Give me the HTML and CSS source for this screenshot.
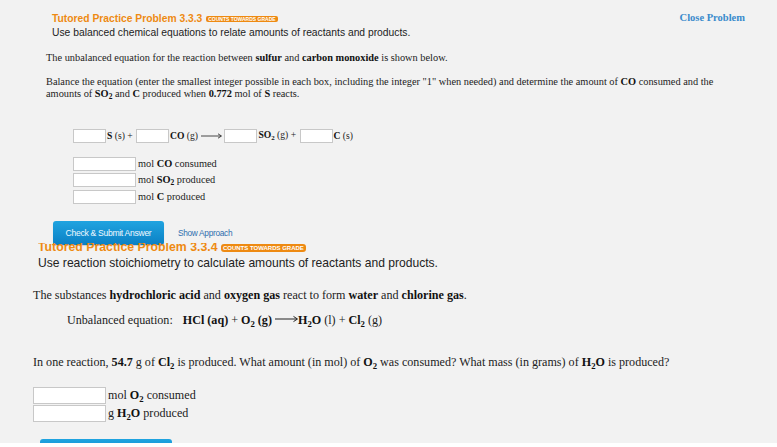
FILE: index.html
```html
<!DOCTYPE html>
<html>
<head>
<meta charset="utf-8">
<link rel="stylesheet" href="styles.css">
</head>
<body>
<div class="page">
  <section class="p1">
    <div class="p1-head">
      <div>
        <div class="p1-title">Tutored Practice Problem 3.3.3 <span class="badge1">COUNTS TOWARDS GRADE</span></div>
        <div class="p1-sub">Use balanced chemical equations to relate amounts of reactants and products.</div>
      </div>
      <a class="close">Close Problem</a>
    </div>
    <div class="p1-body">
      <p class="t1">The unbalanced equation for the reaction between <b>sulfur</b> and <b>carbon monoxide</b> is shown below.</p>
      <p class="t1 t1b">Balance the equation (enter the smallest integer possible in each box, including the integer "1" when needed) and determine the amount of <b>CO</b> consumed and the amounts of <b>SO<sub>2</sub></b> and <b>C</b> produced when <b>0.772</b> mol of <b>S</b> reacts.</p>
      <div class="eq1">
        <span class="box1"></span><span class="sp"><b>S</b> (s) + </span>
        <span class="box1"></span><span class="sp"><b>CO</b> (g) </span><svg class="arr1" width="21" height="6" viewBox="0 0 21 6"><line x1="0" y1="3" x2="20" y2="3" stroke="#333" stroke-width="0.9"/><path d="M17 0.8 L20.5 3 L17 5.2" fill="none" stroke="#333" stroke-width="0.9"/></svg>
        <span class="box1"></span><span class="sp"><b>SO<sub>2</sub></b> (g) + </span>
        <span class="box1"></span><span class="sp"><b>C</b> (s)</span>
      </div>
      <div class="ans1">
        <div class="arow1"><span class="abox1"></span><span>mol <b>CO</b> consumed</span></div>
        <div class="arow1"><span class="abox1"></span><span>mol <b>SO<sub>2</sub></b> produced</span></div>
        <div class="arow1"><span class="abox1"></span><span>mol <b>C</b> produced</span></div>
      </div>
      <div class="btns1">
        <span class="btn1">Check &amp; Submit Answer</span>
        <a class="approach">Show Approach</a>
      </div>
    </div>
  </section>
  <section class="p2">
    <div class="p2-clip"><div class="p2-title">Tutored Practice Problem 3.3.4 <span class="badge2">COUNTS TOWARDS GRADE</span></div></div>
    <div class="p2-sub">Use reaction stoichiometry to calculate amounts of reactants and products.</div>
    <p class="t2 t2a">The substances <b>hydrochloric acid</b> and <b>oxygen gas</b> react to form <b>water</b> and <b>chlorine gas</b>.</p>
    <p class="t2 eq2">Unbalanced equation:<span class="eqgap"></span><b>HCl</b> <b>(aq)</b> + <b>O<sub>2</sub></b> <b>(g)</b> <svg class="arr2" width="23" height="8" viewBox="0 0 23 8"><line x1="0" y1="4" x2="22" y2="4" stroke="#222" stroke-width="1"/><path d="M18.5 1.4 L22.5 4 L18.5 6.6" fill="none" stroke="#222" stroke-width="1"/></svg><b>H<sub>2</sub>O</b> (l) + <b>Cl<sub>2</sub></b> (g)</p>
    <p class="t2 t2c">In one reaction, <b>54.7</b> g of <b>Cl<sub>2</sub></b> is produced. What amount (in mol) of <b>O<sub>2</sub></b> was consumed? What mass (in grams) of <b>H<sub>2</sub>O</b> is produced?</p>
    <div class="ans2">
      <div class="arow2"><span class="abox2"></span><span>mol <b>O<sub>2</sub></b> consumed</span></div>
      <div class="arow2"><span class="abox2"></span><span>g <b>H<sub>2</sub>O</b> produced</span></div>
    </div>
    <div class="btn2"></div>
  </section>
</div>
</body>
</html>
```
FILE: styles.css
```css
html { background: #ffffff; }
body { margin: 0; }
.page {
  height: 443px;
  background: #f2f2f2;
  overflow: hidden;
  color: #222;
}
b { font-weight: bold; color: #111; }
sub { font-size: 0.72em; vertical-align: -0.3em; line-height: 1; }

.p1 { height: 243px; }
.p1-head {
  display: flex;
  justify-content: space-between;
  align-items: flex-start;
  padding: 11px 32px 0 52px;
}
.p1-title {
  font-family: "Liberation Sans", Arial, sans-serif;
  font-weight: bold;
  font-size: 10.3px;
  line-height: 15px;
  color: #ee8a12;
}
.badge1 {
  display: inline-block;
  background: #ee8a12;
  color: #fff;
  font-size: 5px;
  line-height: 6px;
  padding: 0 2px;
  border-radius: 2px;
  vertical-align: 1px;
  margin-left: 1px;
}
.p1-sub {
  font-family: "Liberation Sans", Arial, sans-serif;
  font-size: 10.3px;
  line-height: 13px;
  color: #222;
}
.close {
  font-family: "Liberation Serif", "Times New Roman", serif;
  font-weight: bold;
  font-size: 10.5px;
  line-height: 14px;
  color: #3a8bcc;
}
.p1-body {
  padding-left: 46px;
  font-family: "Liberation Serif", "Times New Roman", serif;
  font-size: 10.35px;
}
.t1 { margin: 13px 0 0; line-height: 12px; }
.t1b { margin-top: 12px; width: 685px; }
.eq1 {
  display: flex;
  align-items: center;
  margin: 28px 0 0 27px;
  height: 14px;
  font-size: 9.6px;
}
.box1 {
  width: 31px;
  height: 12px;
  background: #fff;
  border: 1px solid #c8c8c8;
  margin-right: 1px;
}
.sp { white-space: pre; margin-right: 1px; }
.arr1 { margin-right: 2px; }
.ans1 { margin: 14px 0 0 27px; display: flex; flex-direction: column; gap: 2.5px; }
.arow1 { display: flex; align-items: center; height: 14px; }
.abox1 {
  width: 61px;
  height: 12px;
  background: #fff;
  border: 1px solid #c8c8c8;
  margin-right: 2px;
}
.btns1 {
  display: flex;
  align-items: center;
  margin: 17px 0 0 7px;
}
.btn1 {
  width: 111px;
  height: 24px;
  box-sizing: border-box;
  border-radius: 3px;
  background: linear-gradient(#20a4e0, #0b80c4);
  color: #f0f8ff;
  font-family: "Liberation Sans", Arial, sans-serif;
  font-size: 8.6px;
  letter-spacing: -0.3px;
  display: flex;
  align-items: center;
  justify-content: center;
  box-shadow: 0 1px 1px rgba(0,0,0,0.15);
}
.approach {
  margin-left: 14px;
  font-family: "Liberation Sans", Arial, sans-serif;
  font-size: 8.3px;
  letter-spacing: -0.3px;
  color: #2f6fae;
}

.p2 { padding-left: 38px; }
.p2-clip {
  height: 9px;
  overflow: hidden;
  position: relative;
}
.p2-title {
  position: absolute;
  left: 0;
  bottom: -3px;
  font-family: "Liberation Sans", Arial, sans-serif;
  font-weight: bold;
  font-size: 12.3px;
  line-height: 15px;
  color: #ee8a12;
  white-space: nowrap;
}
.badge2 {
  display: inline-block;
  background: #ee8a12;
  color: #fff;
  font-size: 6px;
  line-height: 8px;
  padding: 0 2px;
  border-radius: 3px;
  vertical-align: 1px;
}
.p2-sub {
  font-family: "Liberation Sans", Arial, sans-serif;
  font-size: 12.1px;
  line-height: 16px;
  color: #222;
  margin-top: 3px;
}
.t2 {
  font-family: "Liberation Serif", "Times New Roman", serif;
  font-size: 12.1px;
  line-height: 15px;
  margin: 0;
  margin-left: -5px;
  color: #222;
}
.t2a { margin-top: 17px; }
.eq2 { margin-top: 10px; padding-left: 34px; }
.eqgap { display: inline-block; width: 10px; }
.arr2 { vertical-align: 1px; margin-right: 0; }
.t2c { margin-top: 27px; }
.ans2 { margin: 17px 0 0 -5px; display: flex; flex-direction: column; gap: 2px; }
.arow2 {
  display: flex;
  align-items: center;
  height: 16px;
  font-family: "Liberation Serif", "Times New Roman", serif;
  font-size: 12.1px;
}
.abox2 {
  width: 71px;
  height: 15px;
  background: #fff;
  border: 1px solid #c8c8c8;
  margin-right: 2px;
}
.btn2 {
  margin: 17px 0 0 2px;
  width: 132px;
  height: 20px;
  border-radius: 3px;
  background: linear-gradient(#20a4e0, #0b80c4);
}
```
